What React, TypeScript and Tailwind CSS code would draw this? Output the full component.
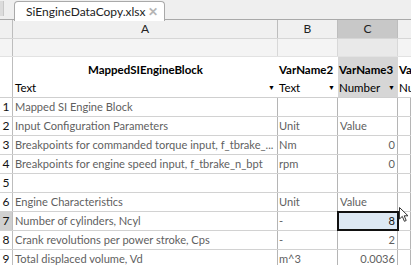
import React from 'react'

type Row = { n: number; a: string; b: string; c: string; num?: boolean }

const rows: Row[] = [
  { n: 1, a: 'Mapped SI Engine Block', b: '', c: '' },
  { n: 2, a: 'Input Configuration Parameters', b: 'Unit', c: 'Value' },
  { n: 3, a: 'Breakpoints for commanded torque input, f_tbrake_...', b: 'Nm', c: '0', num: true },
  { n: 4, a: 'Breakpoints for engine speed input, f_tbrake_n_bpt', b: 'rpm', c: '0', num: true },
  { n: 5, a: '', b: '', c: '' },
  { n: 6, a: 'Engine Characteristics', b: 'Unit', c: 'Value' },
  { n: 7, a: 'Number of cylinders, Ncyl', b: '-', c: '8', num: true },
  { n: 8, a: 'Crank revolutions per power stroke, Cps', b: '-', c: '2', num: true },
  { n: 9, a: 'Total displaced volume, Vd', b: 'm^3', c: '0.0036', num: true },
]

function Arrow() {
  return <span className="text-[7px] leading-none text-black">▼</span>
}

export default function App() {
  return (
    <div
      className="w-[411px] h-[265px] overflow-hidden bg-white text-[11.1px] relative"
      style={{ fontFamily: 'Lato, "Noto Sans", sans-serif' }}
    >
      {/* tab strip */}
      <div className="flex h-[20px] bg-[#efefef] border-b border-[#a9a9a9]">
        <div className="w-[4px] h-[15px] mt-[1px] bg-[#dcdcdc] border-r border-[#c8c8c8]" />
        <div className="ml-[10px] mt-[1px] w-[151px] h-[20px] bg-white border border-b-0 border-[#a9a9a9] rounded-t-[4px] flex items-center pl-[11px] pr-[6px] text-[12px] text-[#222]">
          <span className="flex-1">SiEngineDataCopy.xlsx</span>
          <span className="text-[#b5b5b5] text-[12px] font-bold">✕</span>
        </div>
      </div>

      {/* column letters */}
      <div className="flex h-[19px] bg-[#f0f0f0] border-b border-[#d6d6d6] text-[#222] text-[12px]">
        <div className="w-[13px] shrink-0 border-r border-[#bdbdbd]" />
        <div className="w-[265px] shrink-0 border-r border-[#bdbdbd] flex items-center justify-center">A</div>
        <div className="w-[60px] shrink-0 border-r border-[#bdbdbd] flex items-center justify-center">B</div>
        <div className="w-[60px] shrink-0 border-r border-[#bdbdbd] bg-[#c8c8c8] flex items-center justify-center">C</div>
        <div className="flex-1" />
      </div>

      {/* blank strip */}
      <div className="flex h-[18px] bg-[#f4f4f4] border-b border-[#e2e2e2]">
        <div className="w-[13px] shrink-0 border-r border-[#bdbdbd]" />
        <div className="w-[265px] shrink-0 border-r border-[#d8d8d8]" />
        <div className="w-[60px] shrink-0 border-r border-[#d8d8d8]" />
        <div className="w-[60px] shrink-0 border-r border-[#d8d8d8] bg-[#e9e9e9]" />
        <div className="flex-1" />
      </div>

      {/* variable names */}
      <div className="flex h-[41px] border-b border-[#cfcfcf] text-[11.5px]">
        <div className="w-[13px] shrink-0 border-r border-[#bdbdbd]" />
        <div className="w-[265px] shrink-0 flex flex-col">
          <div className="h-[22px] flex items-end justify-center font-bold">MappedSIEngineBlock</div>
          <div className="h-[19px] flex items-center pl-[2px] pr-[3px]">
            <span className="flex-1">Text</span>
            <Arrow />
          </div>
        </div>
        <div className="w-[60px] shrink-0 flex flex-col overflow-hidden">
          <div className="h-[22px] flex items-end pl-[1px] font-bold whitespace-nowrap">VarName2</div>
          <div className="h-[19px] flex items-center pl-[1px] pr-[3px]">
            <span className="flex-1">Text</span>
            <Arrow />
          </div>
        </div>
        <div className="w-[60px] shrink-0 flex flex-col bg-[#d6d6d6] overflow-hidden">
          <div className="h-[22px] flex items-end pl-[1px] font-bold whitespace-nowrap">VarName3</div>
          <div className="h-[19px] flex items-center pl-[1px] pr-[3px]">
            <span className="flex-1">Number</span>
            <Arrow />
          </div>
        </div>
        <div className="flex-1 flex flex-col overflow-hidden">
          <div className="h-[22px] flex items-end pl-[1px] font-bold whitespace-nowrap">Va</div>
          <div className="h-[19px] flex items-center pl-[1px] whitespace-nowrap">Nu</div>
        </div>
      </div>

      {/* data rows */}
      {rows.map((r) => (
        <div key={r.n} className="flex h-[19px] border-b border-[#d2d2d2] text-[#5f5f5f]">
          <div
            className={`w-[13px] shrink-0 border-r border-[#bdbdbd] flex items-center justify-center text-[#111] text-[12px] ${
              r.n === 7 ? 'bg-[#d0d0d0]' : ''
            }`}
          >
            {r.n}
          </div>
          <div className="w-[265px] shrink-0 border-r border-[#b5b5b5] flex items-center pl-[2px] whitespace-nowrap overflow-hidden">
            {r.a}
          </div>
          <div className="w-[60px] shrink-0 border-r border-[#b5b5b5] flex items-center pl-[1px] whitespace-nowrap">
            {r.b}
          </div>
          <div
            className={`w-[60px] shrink-0 border-r border-[#b5b5b5] flex items-center px-[2px] ${
              r.num ? 'justify-end' : ''
            } ${r.n === 7 ? 'bg-[#dde8f3] outline-2 outline-[#111] -outline-offset-1 text-[#111] relative' : ''}`}
          >
            {r.c}
          </div>
          <div className="flex-1 border-r border-[#b5b5b5]" />
        </div>
      ))}

      {/* mouse pointer */}
      <svg className="absolute left-[399px] top-[207px]" width="10" height="16" viewBox="0 0 10 16">
        <path d="M0.5 0.5 L0.5 12 L3.3 9.4 L5.4 14.3 L7.2 13.5 L5.2 8.8 L9 8.8 Z" fill="#fff" stroke="#333" strokeWidth="1" />
      </svg>
    </div>
  )
}
